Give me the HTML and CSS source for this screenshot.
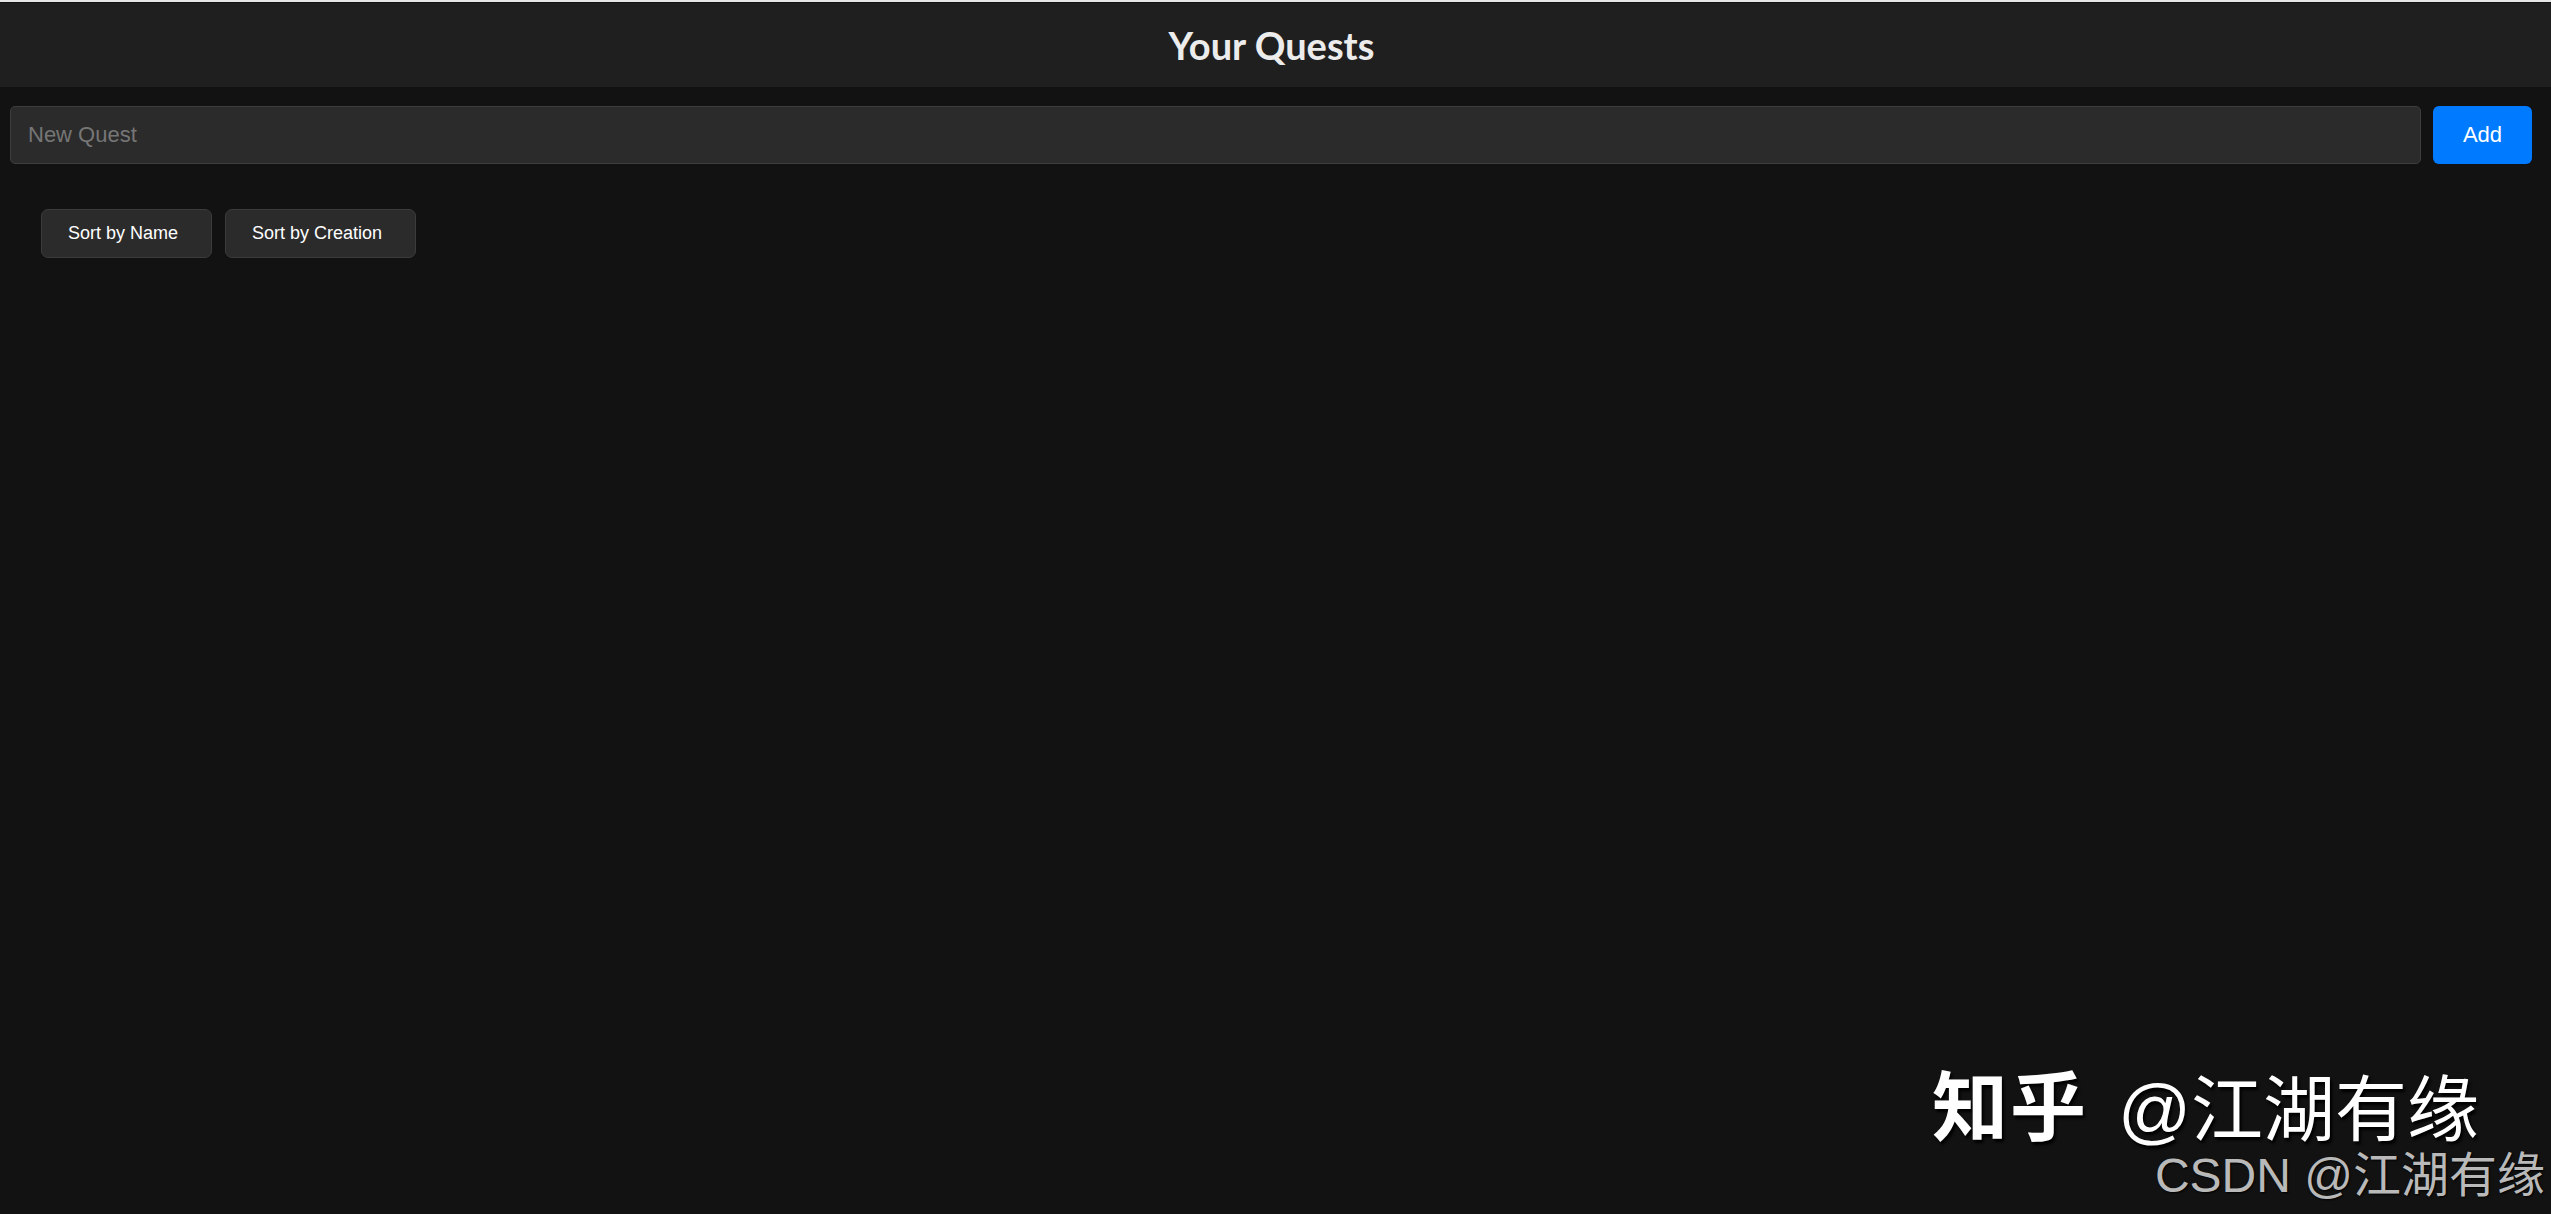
FILE: index.html
```html
<!DOCTYPE html>
<html lang="en">
<head>
    <meta charset="UTF-8">
    <meta name="viewport" content="width=device-width, initial-scale=1.0">
    <title>Your Quests</title>
    <link rel="stylesheet" href="styles.css">
</head>
<body>
    <header class="header">
        <h1>Your Quests</h1>
    </header>
    <div class="quest-form">
        <input type="text" class="quest-input" placeholder="New Quest">
        <button class="add-btn">Add</button>
    </div>
    <div class="sort-bar">
        <button class="sort-btn" data-sort="name">Sort by Name</button>
        <button class="sort-btn" data-sort="created">Sort by Creation</button>
    </div>
    <ul class="quest-list"></ul>

    <div class="watermark">
        <div class="wm-zhihu"><b>知乎</b> @江湖有缘</div>
        <div class="wm-csdn">CSDN @江湖有缘</div>
    </div>
</body>
</html>
```
FILE: styles.css
```css
html, body {
    height: 100%;
}

body {
    margin: 0;
    font-family: "Liberation Sans", Arial, sans-serif;
    background-color: #121212;
    color: #fff;
    border-top: 2px solid #e6e6e6;
    box-sizing: border-box;
    overflow: hidden;
}

.header {
    background-color: #1f1f1f;
    height: 84px;
    margin-top: 1px;
    display: flex;
    justify-content: center;
    align-items: center;
}

.header h1 {
    margin: 0;
    font-family: Lato, "Open Sans", sans-serif;
    font-weight: 700;
    font-size: 38px;
    color: #ececec;
    transform: translate(-4px, 0);
}

.quest-form {
    display: flex;
    gap: 12px;
    padding: 19px 19px 0 10px;
}

.quest-input {
    flex: 1;
    height: 58px;
    box-sizing: border-box;
    padding: 0 17px;
    font-family: "Liberation Sans", Arial, sans-serif;
    font-size: 22px;
    color: #ddd;
    background-color: #2b2b2b;
    border: 1px solid #3d3d3d;
    border-radius: 5px;
    outline: none;
}

.quest-input::placeholder {
    color: #767676;
}

.add-btn {
    width: 99px;
    height: 58px;
    border: none;
    border-radius: 6px;
    background-color: #007bff;
    color: #fff;
    font-family: "Liberation Sans", Arial, sans-serif;
    font-size: 22px;
    cursor: pointer;
}

.sort-bar {
    display: flex;
    gap: 13px;
    padding: 45px 0 0 41px;
}

.sort-btn {
    height: 49px;
    padding: 0 33px 0 26px;
    background-color: #2b2b2b;
    border: 1px solid #3b3b3b;
    border-radius: 7px;
    color: #fff;
    font-family: "Liberation Sans", Arial, sans-serif;
    font-size: 18px;
    cursor: pointer;
}

.quest-list {
    list-style: none;
    margin: 0;
    padding: 0;
}

.watermark {
    position: absolute;
    right: 6px;
    bottom: 14px;
    display: flex;
    flex-direction: column;
    align-items: flex-end;
    pointer-events: none;
}

.wm-zhihu {
    font-family: "Liberation Sans", "Noto Sans CJK SC", sans-serif;
    font-size: 72px;
    line-height: 84px;
    color: #fff;
    margin-right: 66px;
    text-shadow: 2px 3px 3px #000;
}

.wm-zhihu b {
    font-family: "Noto Sans CJK SC", sans-serif;
    font-weight: 700;
    font-size: 76px;
    letter-spacing: 2px;
    margin-right: 10px;
}

.wm-csdn {
    font-family: "Liberation Sans", "Noto Sans CJK SC", sans-serif;
    font-size: 48px;
    line-height: 48px;
    color: #b9b9b9;
    text-shadow: 1px 1px 2px #000;
}
```
